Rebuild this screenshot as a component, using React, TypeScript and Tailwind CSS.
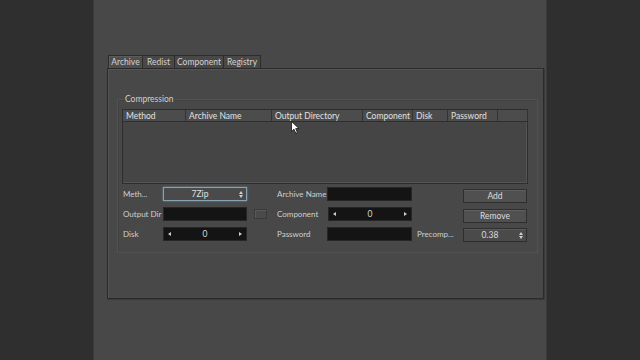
import React from "react";

const font = { fontFamily: 'Lato, "Open Sans", "Liberation Sans", sans-serif' };

const columns = [
  { name: "Method", w: 63 },
  { name: "Archive Name", w: 86 },
  { name: "Output Directory", w: 91 },
  { name: "Component", w: 50 },
  { name: "Disk", w: 35 },
  { name: "Password", w: 50 },
  { name: "", w: 30 },
];

function Label({ text, w }: { text: string; w: string }) {
  return <span className={`${w} shrink-0 whitespace-nowrap text-[8px] leading-[14px] text-[#cfcfcf]`}>{text}</span>;
}

function TextBox({ w }: { w: string }) {
  return <div className={`${w} h-[14px] shrink-0 bg-[#141414] border border-[#262626]`} />;
}

function UpDown() {
  return (
    <div className="flex flex-col items-center justify-center w-[10px] gap-[1px]">
      <span className="block w-0 h-0 border-x-[2.5px] border-x-transparent border-b-[3px] border-b-[#cfcfcf]" />
      <span className="block w-0 h-0 border-x-[2.5px] border-x-transparent border-t-[3px] border-t-[#cfcfcf]" />
    </div>
  );
}

function Spin({ value, w }: { value: string; w: string }) {
  return (
    <div className={`${w} h-[14px] shrink-0 bg-[#141414] border border-[#262626] flex items-center px-[4px]`}>
      <span className="block w-0 h-0 border-y-[2.5px] border-y-transparent border-r-[3px] border-r-[#d0d0d0]" />
      <span className="flex-1 text-center text-[8.5px] leading-[12px] text-[#d8d8d8]">{value}</span>
      <span className="block w-0 h-0 border-y-[2.5px] border-y-transparent border-l-[3px] border-l-[#d0d0d0]" />
    </div>
  );
}

function Button({ text }: { text: string }) {
  return (
    <div className="w-[64px] h-[14px] shrink-0 mt-[2px] bg-[#505050] border border-[#2e2e2e] shadow-[inset_0_1px_0_#606060] flex items-center justify-center text-[8.5px] text-[#dcdcdc]">
      {text}
    </div>
  );
}

export default function App() {
  return (
    <div className="w-[640px] h-[360px] flex bg-[#2f2f2f] overflow-hidden" style={font}>
      <div className="w-[93px] shrink-0" />
      <div className="w-[454px] h-full bg-[#484848] border-x border-[#3a3a3a] pt-[55px] pl-[13px]">
        {/* tabs */}
        <div className="flex h-[13px] ml-[1px] text-[8.5px] text-[#d2d2d2]">
          <div className="w-[35px] bg-[#4e4e4e] border border-b-0 border-[#2c2c2c] shadow-[inset_1px_1px_0_#5c5c5c] flex items-center justify-center">Archive</div>
          <div className="w-[32px] bg-[#484848] border-t border-r border-[#2c2c2c] flex items-center justify-center">Redist</div>
          <div className="w-[49px] bg-[#484848] border-t border-r border-[#2c2c2c] flex items-center justify-center">Component</div>
          <div className="w-[37px] bg-[#484848] border-t border-r border-[#2c2c2c] flex items-center justify-center">Registry</div>
        </div>

        {/* tab pane */}
        <div className="w-[437px] h-[231px] border border-[#2a2a2a] shadow-[inset_1px_1px_0_#555,1px_1px_0_#3a3a3a] bg-[#484848] pl-[9px] pt-[25px]">
          <fieldset className="w-[421px] h-[159px] border border-[#525252] shadow-[inset_1px_1px_0_#424242] pl-[4px]">
            <legend className="ml-[2px] px-[1px] text-[8.5px] leading-[10px] text-[#cfcfcf]">Compression</legend>

            {/* table */}
            <div className="w-[406px] h-[75px] mt-[5px] border border-[#2e2e2e] bg-[#454545] shadow-[inset_-1px_-1px_0_#555]">
              <div className="flex h-[12px] bg-[#4c4c4c] border-b border-[#2e2e2e]">
                {columns.map((c, i) => (
                  <div
                    key={i}
                    className="shrink-0 border-r border-[#333] pl-[3px] text-[8.5px] leading-[12px] text-[#e0e0e0] whitespace-nowrap"
                    style={{ width: c.w }}
                  >
                    {c.name}
                  </div>
                ))}
              </div>
            </div>

            {/* form */}
            <div className="flex flex-col gap-[6px] mt-[3px] pl-[1px]">
              <div className="flex items-start h-[14px]">
                <Label text="Meth..." w="w-[40px]" />
                <div className="w-[84px] h-[14px] shrink-0 bg-[#4a4a4a] border border-[#86a4b4] shadow-[0_0_2px_#6f8c9c] flex items-center">
                  <span className="flex-1 text-center text-[8.5px] text-[#e0e0e0]">7Zip</span>
                  <UpDown />
                </div>
                <div className="w-[30px] shrink-0" />
                <Label text="Archive Name" w="w-[50px]" />
                <TextBox w="w-[85px]" />
                <div className="w-[51px] shrink-0" />
                <Button text="Add" />
              </div>

              <div className="flex items-start h-[14px]">
                <Label text="Output Dir" w="w-[40px]" />
                <TextBox w="w-[84px]" />
                <div className="w-[13px] h-[10px] ml-[7px] mt-[2px] shrink-0 bg-[#4a4a4a] border border-[#3a3a3a] shadow-[inset_1px_1px_0_#5a5a5a]" />
                <div className="w-[10px] shrink-0" />
                <Label text="Component" w="w-[51px]" />
                <Spin value="0" w="w-[84px]" />
                <div className="w-[51px] shrink-0" />
                <Button text="Remove" />
              </div>

              <div className="flex items-start h-[14px]">
                <Label text="Disk" w="w-[40px]" />
                <Spin value="0" w="w-[84px]" />
                <div className="w-[30px] shrink-0" />
                <Label text="Password" w="w-[50px]" />
                <TextBox w="w-[85px]" />
                <div className="w-[5px] shrink-0" />
                <Label text="Precomp..." w="w-[46px]" />
                <div className="w-[64px] h-[14px] shrink-0 mt-[1px] bg-[#4a4a4a] border border-[#2e2e2e] shadow-[inset_0_1px_0_#5a5a5a] flex items-center">
                  <span className="flex-1 text-center text-[8.5px] text-[#dcdcdc]">0.38</span>
                  <UpDown />
                </div>
              </div>
            </div>
          </fieldset>
        </div>
      </div>

      {/* mouse pointer */}
      <svg className="absolute left-[291px] top-[121px]" width="9" height="13" viewBox="0 0 9 13">
        <path d="M0.5 0.5 L0.5 10.5 L3 8.2 L4.8 12.3 L6.4 11.6 L4.7 7.6 L8 7.6 Z" fill="#fff" stroke="#111" strokeWidth="0.8" />
      </svg>
    </div>
  );
}
